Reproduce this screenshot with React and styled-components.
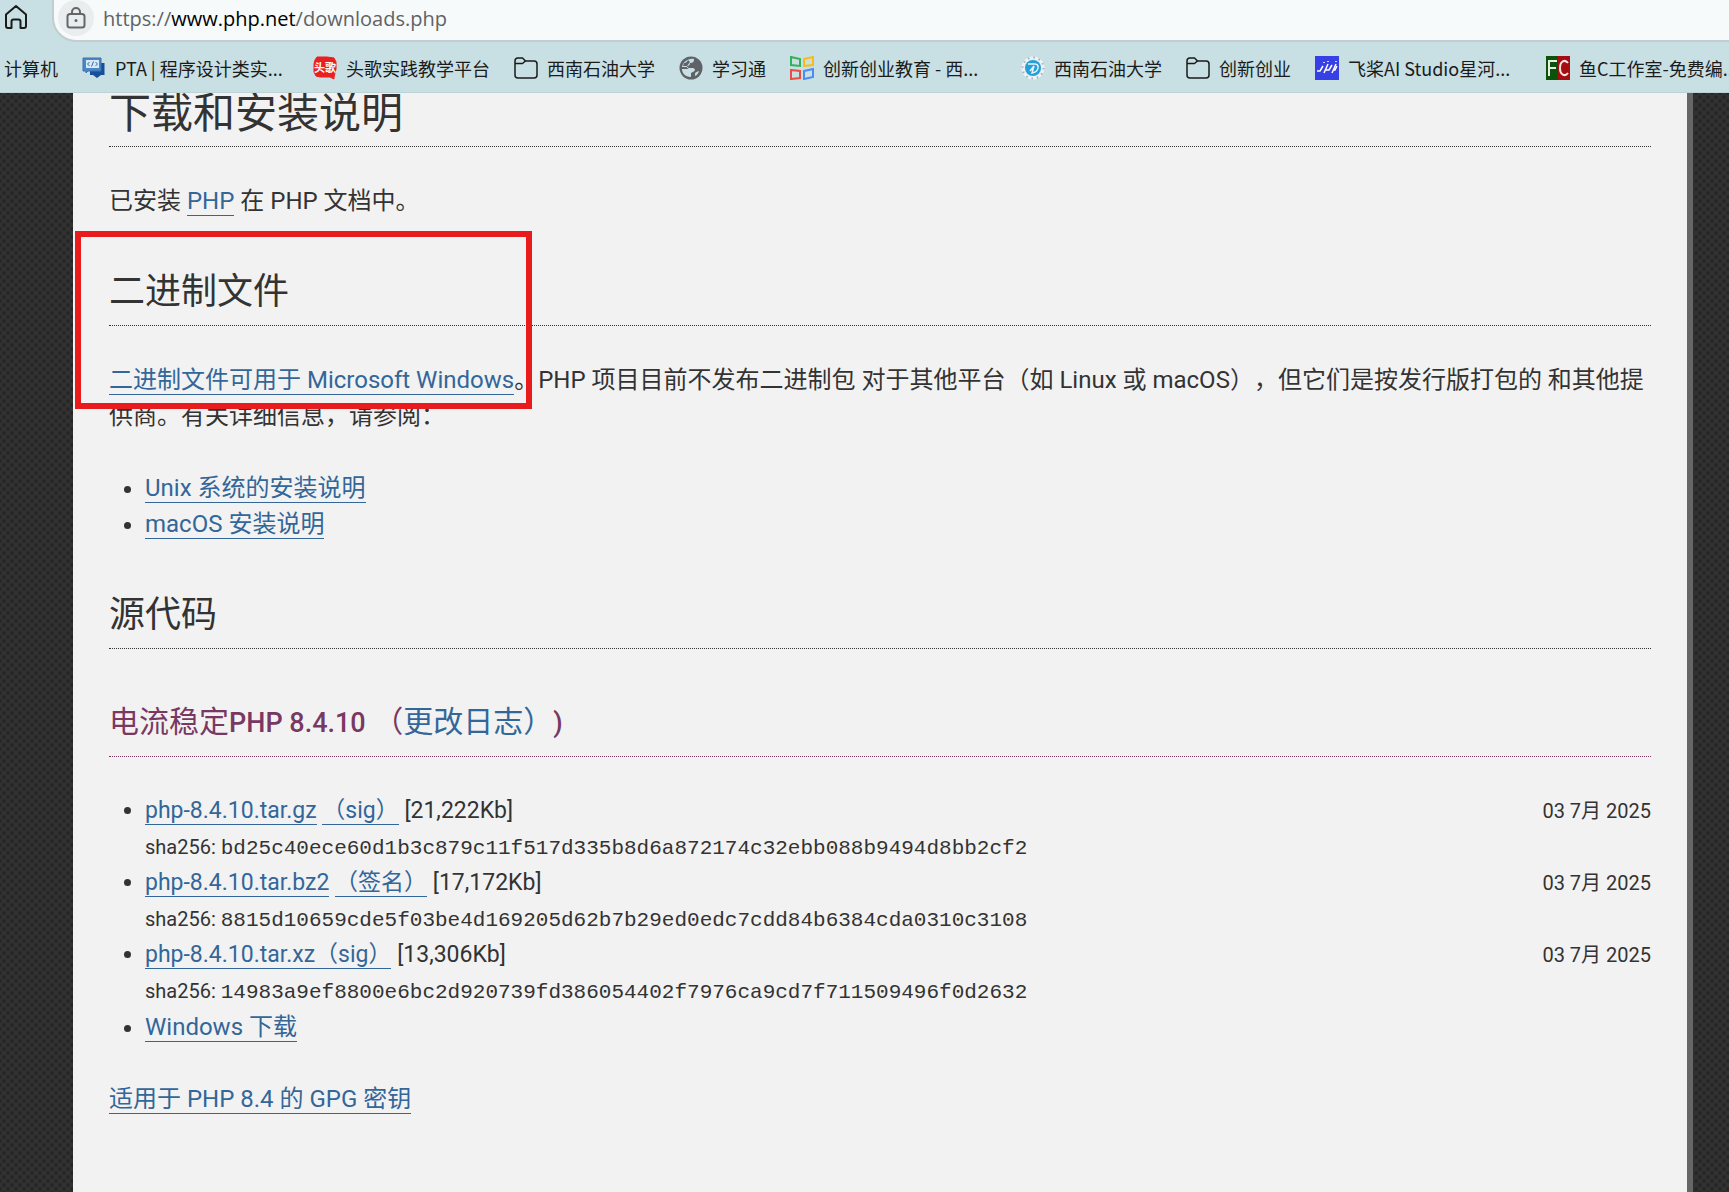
import React from 'react';
import styled, { createGlobalStyle, css } from 'styled-components';

const GlobalStyle = createGlobalStyle`
  * {
    box-sizing: border-box;
  }
  html,
  body,
  #root {
    height: 100%;
    margin: 0;
  }
`;

const downloads = [
  {
    file: 'php-8.4.10.tar.gz',
    sig: '（sig）',
    size: '[21,222Kb]',
    hash: 'bd25c40ece60d1b3c879c11f517d335b8d6a872174c32ebb088b9494d8bb2cf2',
  },
  {
    file: 'php-8.4.10.tar.bz2',
    sig: '（签名）',
    size: '[17,172Kb]',
    hash: '8815d10659cde5f03be4d169205d62b7b29ed0edc7cdd84b6384cda0310c3108',
  },
  {
    file: 'php-8.4.10.tar.xz（sig）',
    size: '[13,306Kb]',
    hash: '14983a9ef8800e6bc2d920739fd386054402f7976ca9cd7f711509496f0d2632',
  },
];

function HomeIcon() {
  return (
    <svg width="24" height="26" viewBox="0 0 24 26" fill="none" stroke="#1b1b1b" strokeWidth="2" strokeLinejoin="round">
      <path d="M2 10.5 12 2l10 8.5V22a2 2 0 0 1-2 2h-3.5v-6.500a2 2 0 0 0-2-2h-5a2 2 0 0 0-2 2V24H4a2 2 0 0 1-2-2Z" />
    </svg>
  );
}

function LockIcon() {
  return (
    <svg width="20" height="22" viewBox="0 0 20 22" fill="none" stroke="#666" strokeWidth="2">
      <rect x="1.500" y="7" width="17" height="13.500" rx="2.500" />
      <path d="M6 7V5a4 4 0 0 1 8 0v2" />
      <circle cx="10" cy="13.500" r="1.500" fill="#666" stroke="none" />
    </svg>
  );
}

function FolderIcon() {
  return (
    <svg width="24" height="24" viewBox="0 0 24 24" fill="none" stroke="#1b1b1b" strokeWidth="1.500" strokeLinejoin="round">
      <path d="M1 5a3 3 0 0 1 3-3h4.500l3 3H20a3 3 0 0 1 3 3v11a3 3 0 0 1-3 3H4a3 3 0 0 1-3-3Z" />
      <path d="M1 7.500h7.500l3-2.500" />
    </svg>
  );
}

function PtaIcon() {
  return (
    <svg width="24" height="24" viewBox="0 0 24 24">
      <path d="M8 7h14.500v12H19l-4 3-4-3H8Z" fill="#174f9b" />
      <path d="M1 2h18v13H6l-2 2v-2H1Z" fill="#4b87c4" stroke="#3a72b2" />
      <rect x="4" y="4" width="13" height="8" fill="#d8e9f5" />
      <path d="M7.500 6 5.500 8l2 2M13.500 6l2 2-2 2M11.500 5.500l-2 5" fill="none" stroke="#2d68aa" />
    </svg>
  );
}

function TougeIcon() {
  return (
    <svg width="24" height="24" viewBox="0 0 24 24">
      <path d="M4 1h10l7 1 2 4v7l-2 8v2l-4-2H7l-4-1-2-4V8l1-4Z" fill="#e9201d" stroke="#e9201d" strokeLinejoin="round" />
      <text x="12" y="16" textAnchor="middle" fontSize="11" fontWeight="700" fontFamily="Noto Sans CJK SC, sans-serif" fill="#fff">
        头歌
      </text>
    </svg>
  );
}

function GlobeIcon() {
  return (
    <svg width="24" height="24" viewBox="0 0 24 24">
      <circle cx="12" cy="12" r="11.500" fill="#5f6368" />
      <path d="M15 3c0 3-1 4-4 4 0 2-1 3-3 3v2h6c1 0 2 1 2 2-1 2-3 2-4 3v4C6 21 3 17 3 13h5c2 0 2-2 0-2H3C4 6 9 2 15 3Z" fill="#c8dfe3" />
      <path d="M5 7c2 0 3-1 4-3l2 2-3 4H4Z" fill="#5f6368" />
      <path d="M16 18c0-2 2-2 4-3-1 3-2 4-4 5Z" fill="#c8dfe3" />
    </svg>
  );
}

function WindowsIcon() {
  return (
    <svg width="24" height="24" viewBox="0 0 24 24" fill="none" strokeWidth="2">
      <path d="M1 1 10 3v7l-9-1Z" stroke="#35b058" />
      <path d="m14 3 9-2v8l-9 1Z" stroke="#f7bd16" />
      <path d="m1 14 9 1v7l-9 1Z" stroke="#ea4d43" />
      <path d="m14 15 9-2v8l-9 2Z" stroke="#4c8bf5" />
    </svg>
  );
}

function SchoolIcon() {
  return (
    <svg width="24" height="24" viewBox="0 0 24 24">
      <circle cx="12" cy="12" r="10" fill="#dcecf3" stroke="#eef2f4" strokeWidth="3" />
      <circle cx="12" cy="12" r="10.500" fill="none" stroke="#9bb0bd" strokeWidth="2" strokeDasharray="1.500 4" />
      <circle cx="12" cy="12" r="8" fill="#279ed6" />
      <path d="M7 8h7c5 0 4 8-3 9l2-7-4 5" fill="none" stroke="#e4f5fd" strokeWidth="1.500" />
    </svg>
  );
}

function StudioIcon() {
  return (
    <svg width="24" height="24" viewBox="0 0 24 24">
      <path d="M0 0h24v24H0Z" fill="#3640e4" />
      <path
        d="M2 15h3l3-5M9 17l4-9M10 14h4l3-5M17 17l4-9M18 14h2l2-4M9 6v1M13 5v1M21 5v1"
        fill="none"
        stroke="#fff"
        strokeWidth="1.500"
      />
    </svg>
  );
}

function FishcIcon() {
  return (
    <svg width="24" height="24" viewBox="0 0 24 24">
      <path d="M0 0h12v24H0Z" fill="#0b520b" />
      <path d="M12 0h12v24H12Z" fill="#a60d10" />
      <path d="M3 20V5h8M3 12h7" fill="none" stroke="#e6eee6" strokeWidth="2" />
      <path d="M22 7c-3-4-8-2-8 5s5 9 8 5" fill="none" stroke="#f5e6e6" strokeWidth="2" />
    </svg>
  );
}

const bookmarks = [
  { label: '计算机' },
  { label: 'PTA | 程序设计类实...', Icon: PtaIcon, full: true },
  { label: '头歌实践教学平台', Icon: TougeIcon },
  { label: '西南石油大学', Icon: FolderIcon, folder: true },
  { label: '学习通', Icon: GlobeIcon },
  { label: '创新创业教育 - 西...', Icon: WindowsIcon, full: true },
  { label: '西南石油大学', Icon: SchoolIcon },
  { label: '创新创业', Icon: FolderIcon, folder: true },
  { label: '飞桨AI Studio星河...', Icon: StudioIcon, full: true },
  { label: '鱼C工作室-免费编...', Icon: FishcIcon, full: true },
];

function Browser() {
  return (
    <Chrome>
      <AddressRow>
        <IconButton type="button" aria-label="主页">
          <HomeIcon />
        </IconButton>
        <AddressBar>
          <LockButton type="button" aria-label="网站信息">
            <LockIcon />
          </LockButton>
          <Url>
            https://<b>www.php.net</b>/downloads.php
          </Url>
        </AddressBar>
      </AddressRow>
      <BookmarkBar>
        {bookmarks.map(({ label, Icon, full, folder }, i) => {
          const content = (
            <>
              {Icon && <Icon />}
              <span>{label}</span>
            </>
          );
          return folder ? (
            <BookmarkFolder key={i} type="button">
              {content}
            </BookmarkFolder>
          ) : (
            <BookmarkLink key={i} href="#" $full={full}>
              {content}
            </BookmarkLink>
          );
        })}
      </BookmarkBar>
    </Chrome>
  );
}

function Download({ file, sig, size, hash }) {
  return (
    <DownloadItem>
      <FileRow>
        <span>
          <Link href="#">{file}</Link> {sig && <Link href="#">{sig}</Link>} {size}
        </span>
        <ReleaseDate>03 7月 2025</ReleaseDate>
      </FileRow>
      <Checksum>
        sha256: <code>{hash}</code>
      </Checksum>
    </DownloadItem>
  );
}

function App() {
  return (
    <Window>
      <GlobalStyle />
      <Browser />
      <Viewport>
        <Page>
          <Highlight />
          <Title>下载和安装说明</Title>
          <p>
            已安装 <Link href="#">PHP</Link> 在 PHP 文档中。
          </p>
          <SectionTitle>二进制文件</SectionTitle>
          <p>
            <Link href="#">二进制文件可用于 Microsoft Windows</Link>。PHP 项目目前不发布二进制包
            对于其他平台（如 Linux 或 macOS），但它们是按发行版打包的 和其他提供商。有关详细信息，请参阅：
          </p>
          <ul>
            <li>
              <Link href="#">Unix 系统的安装说明</Link>
            </li>
            <li>
              <Link href="#">macOS 安装说明</Link>
            </li>
          </ul>
          <SectionTitle>源代码</SectionTitle>
          <ReleaseTitle>
            电流稳定<b>PHP 8.4.10</b> （<a href="#">更改日志）</a>
            <b>)</b>
          </ReleaseTitle>
          <ul>
            {downloads.map((item) => (
              <Download key={item.hash} {...item} />
            ))}
            <li>
              <Link href="#">Windows 下载</Link>
            </li>
          </ul>
          <p>
            <Link href="#">适用于 PHP 8.4 的 GPG 密钥</Link>
          </p>
          <ReleaseTitle>
            旧的稳定<b>PHP 8.3.23</b> （<a href="#">更改日志）</a>
            <b>)</b>
          </ReleaseTitle>
        </Page>
      </Viewport>
    </Window>
  );
}

export default App;

const Window = styled.div`
  display: flex;
  flex-direction: column;
  height: 100%;
  overflow: hidden;
`;

const Chrome = styled.header`
  flex: none;
  background: #c8dfe3;
  border-bottom: 1px solid #b9d3d7;
  color: #1b1b1b;
  font-family: 'Noto Sans CJK SC', sans-serif;
`;

const AddressRow = styled.div`
  display: flex;
  align-items: flex-start;
  height: 42px;
`;

const IconButton = styled.button`
  display: flex;
  padding: 4px 24px 0 4px;
  border: 0;
  background: none;
`;

const AddressBar = styled.div`
  display: flex;
  flex: 1;
  align-items: center;
  height: 42px;
  padding: 0 4px 4px;
  background: #f6fafb;
  border: solid #c3cccf;
  border-width: 0 0 2px 2px;
  border-radius: 0 0 0 24px;
`;

const LockButton = styled.button`
  display: flex;
  align-items: center;
  justify-content: center;
  width: 36px;
  height: 36px;
  padding: 0;
  border: 0;
  border-radius: 50%;
  background: #e9edef;
`;

const Url = styled.span`
  margin-left: 9px;
  color: #5f6365;
  font-family: 'Open Sans', sans-serif;
  font-size: 20px;
  b {
    color: #000;
    font-weight: 400;
  }
`;

const BookmarkBar = styled.nav`
  display: flex;
  align-items: center;
  gap: 24px;
  height: 50px;
  padding: 2px 4px 0;
  overflow: hidden;
`;

const bookmark = css`
  display: flex;
  flex: none;
  align-items: center;
  gap: 9px;
  padding: 0;
  color: #1b1b1b;
  font-family: inherit;
  font-size: 18px;
  line-height: 24px;
  text-decoration: none;
  white-space: nowrap;
`;

const BookmarkLink = styled.a`
  ${bookmark}
  width: ${({ $full }) => ($full ? '207px' : 'auto')};
`;

const BookmarkFolder = styled.button`
  ${bookmark}
  border: 0;
  background: none;
`;

const Viewport = styled.div`
  flex: 1;
  min-height: 0;
  padding: 0 36px 0 73px;
  overflow: hidden;
  background-color: #333;
  background-image:
    radial-gradient(circle, #252525 1px, transparent 3px),
    radial-gradient(circle, #252525 1px, transparent 3px);
  background-position: 0 0, 4px 4px;
  background-size: 8px 8px;
`;

const Page = styled.main`
  position: relative;
  min-height: 100%;
  padding: 0 36px;
  background: #f2f2f2;
  border-right: 6px solid #666;
  color: #333;
  font-family: Roboto, 'Noto Sans CJK SC', sans-serif;
  font-size: 24px;
  font-weight: 400;
  line-height: 36px;
  text-spacing-trim: space-all;

  p,
  ul {
    margin: 0 0 36px;
  }
  ul {
    padding-left: 36px;
  }
`;

const Highlight = styled.div`
  position: absolute;
  top: 138px;
  left: 2px;
  width: 457px;
  height: 178px;
  border: 6px solid #e81c1c;
  pointer-events: none;
`;

const Title = styled.h1`
  margin: 0 0 36px;
  padding-bottom: 11px;
  border-bottom: 1px dotted #333;
  font-size: 42px;
  font-weight: 400;
  line-height: 42px;
`;

const SectionTitle = styled.h2`
  margin: 0 0 36px;
  padding: 13px 0 9px;
  border-bottom: 1px dotted #333;
  font-size: 36px;
  font-weight: 400;
  line-height: 48px;
`;

const ReleaseTitle = styled.h3`
  margin: 0 0 36px;
  padding: 13px 0 9px;
  border-bottom: 1px dotted #793862;
  color: #793862;
  font-size: 30px;
  font-weight: 400;
  line-height: 48px;
  p + & {
    margin-top: 54px;
  }
  b {
    font-size: 27px;
    font-weight: 500;
  }
  a {
    color: #369;
    text-decoration: none;
  }
`;

const Link = styled.a`
  border-bottom: 1px solid #369;
  color: #369;
  text-decoration: none;
`;

const DownloadItem = styled.li`
  font-size: 23px;
`;

const FileRow = styled.div`
  display: flex;
  justify-content: space-between;
`;

const ReleaseDate = styled.span`
  font-size: 20px;
`;

const Checksum = styled.div`
  font-size: 20px;
  code {
    font-family: 'Liberation Mono', monospace;
    font-size: 21px;
    line-height: 24px;
  }
`;
